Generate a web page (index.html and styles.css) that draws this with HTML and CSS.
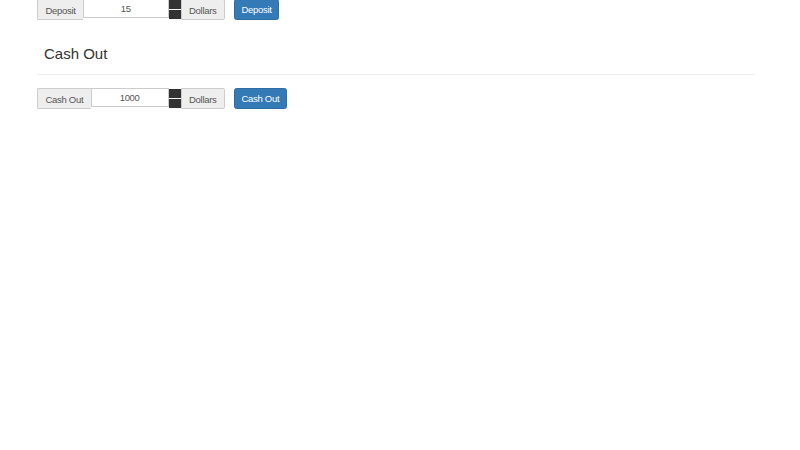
FILE: index.html
```html
<!DOCTYPE html>
<html>
<head>
<meta charset="utf-8">
<link rel="stylesheet" href="styles.css">
</head>
<body>
<div class="page">
  <form class="form-row form-top">
    <div class="group">
      <span class="addon addon-left">Deposit</span>
      <div class="field">
        <span class="input">15</span>
        <span class="spin"><i class="spin-btn"></i><i class="spin-btn"></i></span>
      </div>
      <span class="addon addon-right">Dollars</span>
    </div>
    <button type="button" class="btn">Deposit</button>
  </form>

  <div class="page-header">
    <h3 class="title">Cash Out</h3>
  </div>

  <form class="form-row form-cash">
    <div class="group">
      <span class="addon addon-left">Cash Out</span>
      <div class="field">
        <span class="input">1000</span>
        <span class="spin"><i class="spin-btn"></i><i class="spin-btn"></i></span>
      </div>
      <span class="addon addon-right">Dollars</span>
    </div>
    <button type="button" class="btn">Cash Out</button>
  </form>
</div>
</body>
</html>
```

FILE: styles.css
```css
html, body {
  margin: 0;
  padding: 0;
  background: #fff;
}

body {
  font-family: "Liberation Sans", Arial, sans-serif;
  color: #333;
}

.page {
  padding: 0 45px 0 37px;
}

.form-row {
  display: flex;
  align-items: flex-start;
  margin: 0;
}

.form-top {
  margin-top: -1px;
}

.form-cash {
  margin-top: 13px;
}

.group {
  display: flex;
  width: 188px;
  height: 21px;
}

.addon,
.input,
.btn {
  font-family: "Liberation Sans", Arial, sans-serif;
  font-size: 9.5px;
  letter-spacing: -0.3px;
}

.addon {
  box-sizing: border-box;
  height: 21px;
  display: flex;
  align-items: center;
  padding: 1px 7.5px 0;
  border: 1px solid #ccc;
  background: #eee;
  color: #555;
  white-space: nowrap;
}

.addon-left {
  border-right: 0;
  border-radius: 2px 0 0 2px;
}

.addon-right {
  border-radius: 0 2px 2px 0;
}

.field {
  flex: 1;
  display: flex;
  min-width: 0;
}

.input {
  flex: 1;
  box-sizing: border-box;
  height: 19px;
  border: 1px solid #ccc;
  background: #fff;
  color: #555;
  display: flex;
  align-items: center;
  justify-content: center;
}

.spin {
  width: 12px;
  padding-top: 1px;
  display: flex;
  flex-direction: column;
  gap: 1px;
}

.spin-btn {
  display: block;
  height: 9px;
  background: #333;
}

.btn {
  box-sizing: border-box;
  height: 21px;
  margin-left: 9px;
  padding: 1px 6.5px 0;
  border: 1px solid #2e6da4;
  border-radius: 2.5px;
  background: #337ab7;
  color: #fff;
  line-height: 1;
}

.page-header {
  margin-top: 26px;
  padding-bottom: 12px;
  border-bottom: 1px solid #eee;
}

.title {
  margin: 0;
  padding-left: 7px;
  font-size: 15px;
  font-weight: normal;
  line-height: 16px;
  color: #333;
}
```
